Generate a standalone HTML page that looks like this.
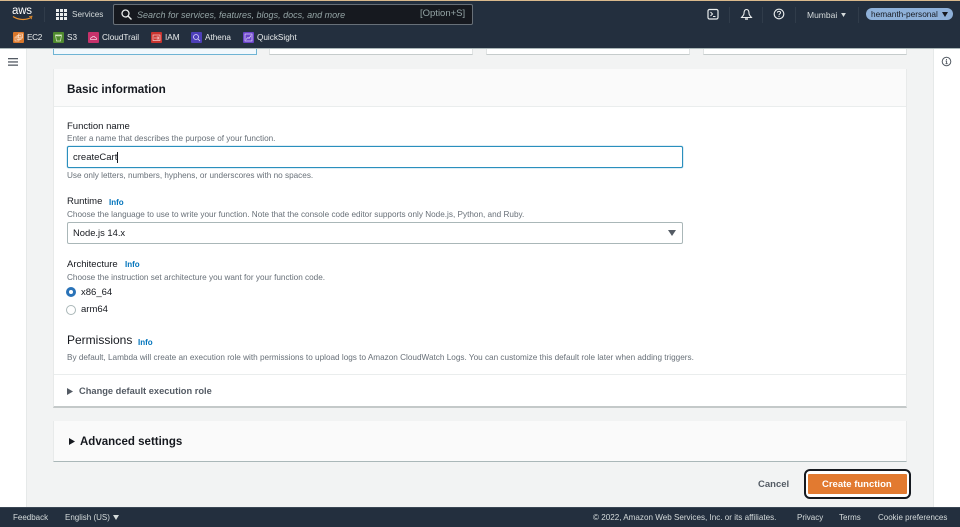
<!DOCTYPE html>
<html>
<head>
<meta charset="utf-8">
<style>
html,body{margin:0;padding:0;width:960px;height:527px;overflow:hidden;background:#f2f3f3;font-family:"Liberation Sans",sans-serif}
div,span,a{position:absolute;white-space:nowrap;box-sizing:border-box}
svg{position:absolute;display:block}
.h{color:#d5dbdb;font-size:8.2px;line-height:12px}
.ic{width:11px;height:11px;top:32px;border-radius:1px}
.l{color:#16191f;font-size:9.5px;line-height:12px}
.d{color:#687078;font-size:8.2px;line-height:11px}
.i{color:#0073bb;font-size:8px;font-weight:bold;line-height:11px}
.sep{width:1px;height:16px;top:7px;background:#303c4a}
.f{color:#d5dbdb;font-size:8px;line-height:12px;top:512px}
</style>
</head>
<body>
<div style="left:0;top:1px;width:960px;height:47px;background:#232f3e"></div>
<div style="left:0;top:0;width:960px;height:1px;background:#d9b98c"></div>

<div style="left:12px;top:5px;color:#fff;font-size:11.5px;line-height:12px;letter-spacing:-.2px">aws</div>
<svg style="left:12px;top:15px" width="22" height="7" viewBox="0 0 22 7"><path d="M1 1.500C6 5 14 5.500 19 2.500" fill="none" stroke="#ec912d" stroke-width="1.200"/><path d="M17 1.500l3-.3-.8 3" fill="none" stroke="#ec912d" stroke-width=".8"/></svg>
<div style="left:44px;top:7px;width:1px;height:15px;background:#303c4a"></div>
<svg style="left:56px;top:9px" width="11" height="11" viewBox="0 0 11 11" fill="#eaeded"><rect width="3" height="3"/><rect x="4" width="3" height="3"/><rect x="8" width="3" height="3"/><rect y="4" width="3" height="3"/><rect x="4" y="4" width="3" height="3"/><rect x="8" y="4" width="3" height="3"/><rect y="8" width="3" height="3"/><rect x="4" y="8" width="3" height="3"/><rect x="8" y="8" width="3" height="3"/></svg>
<div class="h" style="left:72px;top:9px">Services</div>

<div style="left:113px;top:4px;width:360px;height:21px;background:#16191f;border:1px solid #687078;border-radius:2px"></div>
<svg style="left:121px;top:9px" width="11" height="11" viewBox="0 0 11 11"><circle cx="4.500" cy="4.500" r="3.500" fill="none" stroke="#eaeded" stroke-width="1.300"/><path d="M7 7l3.500 3.500" stroke="#eaeded" stroke-width="1.400"/></svg>
<div style="left:137px;top:9px;color:#95a5a6;font-size:9px;line-height:12px;font-style:italic">Search for services, features, blogs, docs, and more</div>
<div style="left:420px;top:8px;color:#95a5a6;font-size:9.500px;line-height:12px">[Option+S]</div>

<svg style="left:707px;top:8px" width="13" height="13" viewBox="0 0 13 13"><rect x="1" y="1.500" width="10" height="9.500" rx="1.500" fill="none" stroke="#eaeded" stroke-width="1.200"/><path d="M3.500 4l2 2-2 2M6 8.500h2.500" fill="none" stroke="#eaeded" stroke-width="1"/></svg>
<div class="sep" style="left:729px"></div>
<svg style="left:740px;top:8px" width="13" height="13" viewBox="0 0 13 13"><path d="M6.500 1.500C4.500 1.500 4 3.500 4 5.500 4 7.500 2.500 8 1.500 9.500h10C10.500 8 9 7.500 9 5.500 9 3.500 8.500 1.500 6.500 1.500z" fill="none" stroke="#eaeded" stroke-width="1.100"/><path d="M5 11h3" stroke="#eaeded" stroke-width="1.400"/></svg>
<div class="sep" style="left:762px"></div>
<svg style="left:773px;top:8px" width="12" height="12" viewBox="0 0 12 12"><circle cx="6" cy="6" r="4.800" fill="none" stroke="#eaeded" stroke-width="1.100"/><path d="M4.400 4.600C4.500 3 7.600 3 7.600 4.700 7.600 5.800 6 5.800 6 7.200" fill="none" stroke="#eaeded" stroke-width="1"/><rect x="5.500" y="8" width="1" height="1" fill="#eaeded"/></svg>
<div class="sep" style="left:795px"></div>
<div class="h" style="left:807px;top:9px;font-size:8.500px">Mumbai</div>
<svg style="left:841px;top:13px" width="5" height="4" viewBox="0 0 6 5"><path d="M0 0h6L3 5z" fill="#d5dbdb"/></svg>
<div class="sep" style="left:858px"></div>
<div style="left:866px;top:8px;width:87px;height:12px;background:#8fb1d9;border-radius:6px"></div>
<div style="left:871px;top:8px;color:#16191f;font-size:8.300px;line-height:12px">hemanth-personal</div>
<svg style="left:942px;top:12px" width="6" height="5" viewBox="0 0 6 5"><path d="M0 0h6L3 5z" fill="#16191f"/></svg>

<div class="ic" style="left:13px;background:#d9772b"></div>
<svg style="left:13px;top:32px" width="11" height="11" viewBox="0 0 11 11" fill="none" stroke="#fbe3cd" stroke-width=".7"><rect x="2" y="5" width="4" height="4"/><rect x="4" y="3.500" width="4" height="4"/><rect x="5.500" y="2" width="4" height="4"/></svg>
<div class="h" style="left:27px;top:32px;color:#eaeded;letter-spacing:-.3px">EC2</div>
<div class="ic" style="left:53px;background:#4f8a2e"></div>
<svg style="left:53px;top:32px" width="11" height="11" viewBox="0 0 11 11" fill="none" stroke="#dcecc8" stroke-width=".7"><path d="M2.500 3h6l-1 6h-4zM2.500 3c1 1.200 5 1.200 6 0"/></svg>
<div class="h" style="left:67px;top:32px;color:#eaeded">S3</div>
<div class="ic" style="left:88px;background:#c7326b"></div>
<svg style="left:88px;top:32px" width="11" height="11" viewBox="0 0 11 11" fill="none" stroke="#f7cfe0" stroke-width=".7"><path d="M2.500 7.500C2 6 3.500 5.500 4 5.500 4.500 4 6.800 4 7 5.500 8.500 5.500 9 7 8.500 7.500z"/></svg>
<div class="h" style="left:102px;top:32px;color:#eaeded">CloudTrail</div>
<div class="ic" style="left:151px;background:#c9342f"></div>
<svg style="left:151px;top:32px" width="11" height="11" viewBox="0 0 11 11" fill="none" stroke="#f9d5d3" stroke-width=".7"><rect x="2" y="3" width="7" height="5.500"/><path d="M4 5v2M6 5h1.500v2H6z"/></svg>
<div class="h" style="left:165px;top:32px;color:#eaeded">IAM</div>
<div class="ic" style="left:191px;background:#4d3fb8"></div>
<svg style="left:191px;top:32px" width="11" height="11" viewBox="0 0 11 11" fill="none" stroke="#ddd8f8" stroke-width=".8"><circle cx="5" cy="5" r="2.500"/><path d="M7 7l2 2"/></svg>
<div class="h" style="left:205px;top:32px;color:#eaeded">Athena</div>
<div class="ic" style="left:243px;background:#6a43c9"></div>
<svg style="left:243px;top:32px" width="11" height="11" viewBox="0 0 11 11" fill="none" stroke="#e5dcfa" stroke-width=".7"><rect x="2" y="2" width="7" height="7"/><path d="M3 7.500l2-2 1 1 2-3"/></svg>
<div class="h" style="left:257px;top:32px;color:#eaeded">QuickSight</div>

<div style="left:0;top:48px;width:27px;height:459px;background:#fff;border-right:1px solid #e6e9e9"></div>
<svg style="left:8px;top:57px" width="11" height="10" viewBox="0 0 11 10" fill="#545b64"><rect y="1" width="10" height="1.300"/><rect y="4.300" width="10" height="1.300"/><rect y="7.500" width="10" height="1.300"/></svg>
<div style="left:933px;top:48px;width:27px;height:459px;background:#fff;border-left:1px solid #e6e9e9"></div>
<svg style="left:941px;top:56px" width="11" height="11" viewBox="0 0 11 11"><circle cx="5.500" cy="5.500" r="4.300" fill="none" stroke="#545b64" stroke-width="1"/><path d="M4.600 5h1v2.500M4.500 7.700h2.200M5.500 3v1" fill="none" stroke="#545b64" stroke-width=".9"/></svg>

<div style="left:53px;top:49px;width:204px;height:6px;background:#f2f8fc;border:1px solid #6fb4d4;border-top:0"></div>
<div style="left:269px;top:49px;width:204px;height:6px;background:#fff;border-bottom:1px solid #c6cccc;border-left:1px solid #e0e3e3;border-right:1px solid #e0e3e3"></div>
<div style="left:486px;top:49px;width:204px;height:6px;background:#fff;border-bottom:1px solid #c6cccc;border-left:1px solid #e0e3e3;border-right:1px solid #e0e3e3"></div>
<div style="left:703px;top:49px;width:204px;height:6px;background:#fff;border-bottom:1px solid #c6cccc;border-left:1px solid #e0e3e3;border-right:1px solid #e0e3e3"></div>
<div style="left:0;top:48px;width:960px;height:1px;background:#aab7b8"></div>

<div style="left:53px;top:69px;width:854px;height:339px;background:#fff;border-bottom:2px solid #c4c9c9;border-left:1px solid #e8eaea;border-right:1px solid #e8eaea"></div>
<div style="left:54px;top:69px;width:852px;height:38px;background:#fafafa;border-bottom:1px solid #eaeded"></div>
<div style="left:67px;top:82px;color:#16191f;font-size:11.700px;font-weight:bold;line-height:15px">Basic information</div>

<div class="l" style="left:67px;top:121px">Function name</div>
<div class="d" style="left:67px;top:133px">Enter a name that describes the purpose of your function.</div>
<div style="left:67px;top:146px;width:616px;height:22px;background:#fff;border:1px solid #2a8fbd;border-radius:2px;box-shadow:0 0 1px #2a8fbd"></div>
<div style="left:73px;top:152px;color:#16191f;font-size:9.500px;line-height:12px">createCart</div>
<div style="left:117px;top:152px;width:1px;height:11px;background:#16191f"></div>
<div class="d" style="left:67px;top:170px">Use only letters, numbers, hyphens, or underscores with no spaces.</div>

<div class="l" style="left:67px;top:196px">Runtime</div>
<div class="i" style="left:109px;top:197px">Info</div>
<div class="d" style="left:67px;top:209px">Choose the language to use to write your function. Note that the console code editor supports only Node.js, Python, and Ruby.</div>
<div style="left:67px;top:222px;width:616px;height:22px;background:#fff;border:1px solid #aab7b8;border-radius:2px"></div>
<div style="left:73px;top:227px;color:#16191f;font-size:9.400px;line-height:12px">Node.js 14.x</div>
<svg style="left:668px;top:230px" width="8" height="6" viewBox="0 0 8 6"><path d="M0 0h8L4 6z" fill="#545b64"/></svg>

<div class="l" style="left:67px;top:259px">Architecture</div>
<div class="i" style="left:125px;top:259px">Info</div>
<div class="d" style="left:67px;top:272px">Choose the instruction set architecture you want for your function code.</div>
<div style="left:66px;top:287px;width:10px;height:10px;border-radius:50%;border:3px solid #2a73b8;background:#fff"></div>
<div class="l" style="left:81px;top:287px">x86_64</div>
<div style="left:66px;top:305px;width:10px;height:10px;border-radius:50%;border:1px solid #aab7b8;background:#fff"></div>
<div class="l" style="left:81px;top:304px">arm64</div>

<div style="left:67px;top:333px;color:#16191f;font-size:12px;line-height:15px">Permissions</div>
<div class="i" style="left:138px;top:337px">Info</div>
<div class="d" style="left:67px;top:352px">By default, Lambda will create an execution role with permissions to upload logs to Amazon CloudWatch Logs. You can customize this default role later when adding triggers.</div>
<div style="left:54px;top:374px;width:852px;height:1px;background:#eaeded"></div>
<svg style="left:67px;top:388px" width="6" height="7" viewBox="0 0 6 7"><path d="M0 0l6 3.500L0 7z" fill="#545b64"/></svg>
<div style="left:79px;top:385px;color:#545b64;font-size:9.300px;font-weight:bold;line-height:12px">Change default execution role</div>

<div style="left:53px;top:421px;width:854px;height:41px;background:#fafafa;border-bottom:1px solid #aab7b8;border-left:1px solid #e8eaea;border-right:1px solid #e8eaea"></div>
<svg style="left:69px;top:438px" width="6" height="7" viewBox="0 0 6 7"><path d="M0 0l6 3.500L0 7z" fill="#16191f"/></svg>
<div style="left:80px;top:435px;color:#16191f;font-size:11.500px;font-weight:bold;line-height:15px">Advanced settings</div>

<div style="left:758px;top:479px;color:#545b64;font-size:9.500px;font-weight:bold;line-height:12px">Cancel</div>
<div style="left:804px;top:469px;width:107px;height:30px;border:2px solid #16191f;border-radius:6px;background:#fff"></div>
<div style="left:808px;top:474px;width:99px;height:20px;background:#e27a30;border-radius:1px"></div>
<div style="left:822px;top:479px;color:#fff;font-size:9.500px;font-weight:bold;line-height:12px">Create function</div>

<div style="left:0;top:507px;width:960px;height:20px;background:#232f3e;border-top:1px solid #3a4654"></div>
<div class="f" style="left:13px">Feedback</div>
<div class="f" style="left:65px">English (US)</div>
<svg style="left:113px;top:515px" width="6" height="5" viewBox="0 0 6 5"><path d="M0 0h6L3 5z" fill="#d5dbdb"/></svg>
<div class="f" style="left:593px;font-size:8.100px">© 2022, Amazon Web Services, Inc. or its affiliates.</div>
<div class="f" style="left:797px">Privacy</div>
<div class="f" style="left:839px">Terms</div>
<div class="f" style="left:878px">Cookie preferences</div>
</body>
</html>
